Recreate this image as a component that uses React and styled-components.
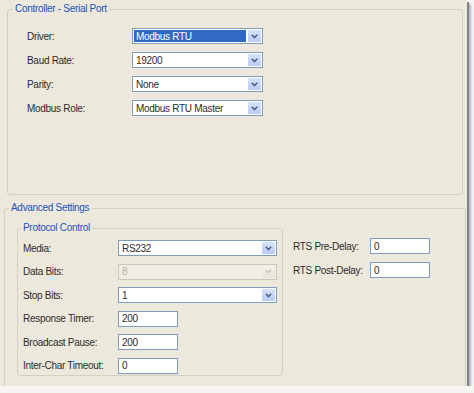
import React from "react";
import styled, { createGlobalStyle } from "styled-components";

const Global = createGlobalStyle`
  html, body { margin: 0; padding: 0; background: #f6f5f1; }
  body { font-family: "Liberation Sans", Arial, sans-serif; font-size: 10px; letter-spacing: -0.3px; color: #2b2b2b; }
  * { box-sizing: border-box; }
`;

const Page = styled.div`
  width: 467px;
  height: 386px;
  background: #ece9dc;
  padding: 2px 1px 0 4px;
  box-shadow: 2px 2px 0 #808086, 4px 4px 2px #b4b3c0;
  display: flex;
  flex-direction: column;
  gap: 6px;
  overflow: hidden;
`;

const Group = styled.fieldset`
  margin: 0 ${(p) => p.$mr || 0}px 0 ${(p) => p.$ml || 0}px;
  padding: 0;
  border: 1px solid #d3d0c2;
  border-radius: 3px;
  min-width: 0;
  ${(p) => (p.$grow ? "flex: 1; margin-bottom: -2px;" : "")}
`;

const Legend = styled.legend`
  color: #2050bd;
  font-size: 10px;
  line-height: 14px;
  padding: 0 2px;
  margin-left: ${(p) => p.$ml}px;
`;

const SerialBody = styled.div`
  height: 178px;
  padding: 12px 0 0 19px;
  display: flex;
  flex-direction: column;
  gap: 8px;
`;

const AdvBody = styled.div`
  padding: 6px 0 6px 12px;
  display: flex;
  gap: 10px;
  align-items: flex-start;
`;

const ProtoBody = styled.div`
  width: 264px;
  padding: 5px 5px 1px 5px;
  display: flex;
  flex-direction: column;
  gap: 7.5px;
`;

const RightCol = styled.div`
  margin-top: 17px;
  display: flex;
  flex-direction: column;
  gap: 8px;
`;

const Row = styled.div`
  display: flex;
  align-items: center;
  height: 16px;
`;

const Label = styled.span`
  width: ${(p) => p.$w}px;
  flex: none;
  white-space: nowrap;
  color: #2b2b2b;
`;

const SelectBox = styled.div`
  width: ${(p) => p.$w}px;
  height: 16px;
  border: 1px solid ${(p) => (p.$disabled ? "#cbc8b8" : "#7f9db9")};
  background: ${(p) => (p.$disabled ? "#efede5" : "#fff")};
  display: flex;
  align-items: stretch;
  padding: 1px;
`;

const SelectText = styled.div`
  flex: 1;
  margin-right: 2px;
  padding-left: 2px;
  display: flex;
  align-items: center;
  white-space: nowrap;
  background: ${(p) => (p.$selected ? "#316ac5" : "transparent")};
  color: ${(p) => (p.$selected ? "#fff" : p.$disabled ? "#b5b2a4" : "#2b2b2b")};
`;

const ArrowBtn = styled.div`
  width: 13px;
  flex: none;
  border-radius: 1px;
  background: ${(p) =>
    p.$disabled
      ? "linear-gradient(#f1f0ea, #e6e4dc)"
      : "linear-gradient(#d6e1fb, #b9cbf6)"};
  display: flex;
  align-items: center;
  justify-content: center;
`;

const TextBox = styled.div`
  width: ${(p) => p.$w}px;
  height: 16px;
  border: 1px solid #7f9db9;
  background: #fff;
  padding-left: 3px;
  display: flex;
  align-items: center;
  color: #2b2b2b;
`;

const Chevron = ({ disabled }) => (
  <svg width="7" height="5" viewBox="0 0 7 5">
    <path
      d="M0.8 0.8 L3.5 3.5 L6.2 0.8"
      fill="none"
      stroke={disabled ? "#c9c7bd" : "#4d6185"}
      strokeWidth="1.6"
    />
  </svg>
);

const Select = ({ w, value, selected, disabled }) => (
  <SelectBox $w={w} $disabled={disabled}>
    <SelectText $selected={selected} $disabled={disabled}>
      {value}
    </SelectText>
    <ArrowBtn $disabled={disabled}>
      <Chevron disabled={disabled} />
    </ArrowBtn>
  </SelectBox>
);

export default function App() {
  return (
    <>
      <Global />
      <Page>
        <Group $ml={3} $mr={3}>
          <Legend $ml={5}>Controller - Serial Port</Legend>
          <SerialBody>
            <Row>
              <Label $w={105}>Driver:</Label>
              <Select w={131} value="Modbus RTU" selected />
            </Row>
            <Row>
              <Label $w={105}>Baud Rate:</Label>
              <Select w={131} value="19200" />
            </Row>
            <Row>
              <Label $w={105}>Parity:</Label>
              <Select w={131} value="None" />
            </Row>
            <Row>
              <Label $w={105}>Modbus Role:</Label>
              <Select w={131} value="Modbus RTU Master" />
            </Row>
          </SerialBody>
        </Group>
        <Group $grow>
          <Legend $ml={4}>Advanced Settings</Legend>
          <AdvBody>
            <Group>
              <Legend $ml={3}>Protocol Control</Legend>
              <ProtoBody>
                <Row>
                  <Label $w={95}>Media:</Label>
                  <Select w={159} value="RS232" />
                </Row>
                <Row>
                  <Label $w={95}>Data Bits:</Label>
                  <Select w={159} value="8" disabled />
                </Row>
                <Row>
                  <Label $w={95}>Stop Bits:</Label>
                  <Select w={159} value="1" />
                </Row>
                <Row>
                  <Label $w={95}>Response Timer:</Label>
                  <TextBox $w={60}>200</TextBox>
                </Row>
                <Row>
                  <Label $w={95}>Broadcast Pause:</Label>
                  <TextBox $w={60}>200</TextBox>
                </Row>
                <Row>
                  <Label $w={95}>Inter-Char Timeout:</Label>
                  <TextBox $w={60}>0</TextBox>
                </Row>
              </ProtoBody>
            </Group>
            <RightCol>
              <Row>
                <Label $w={77}>RTS Pre-Delay:</Label>
                <TextBox $w={60}>0</TextBox>
              </Row>
              <Row>
                <Label $w={77}>RTS Post-Delay:</Label>
                <TextBox $w={60}>0</TextBox>
              </Row>
            </RightCol>
          </AdvBody>
        </Group>
      </Page>
    </>
  );
}
